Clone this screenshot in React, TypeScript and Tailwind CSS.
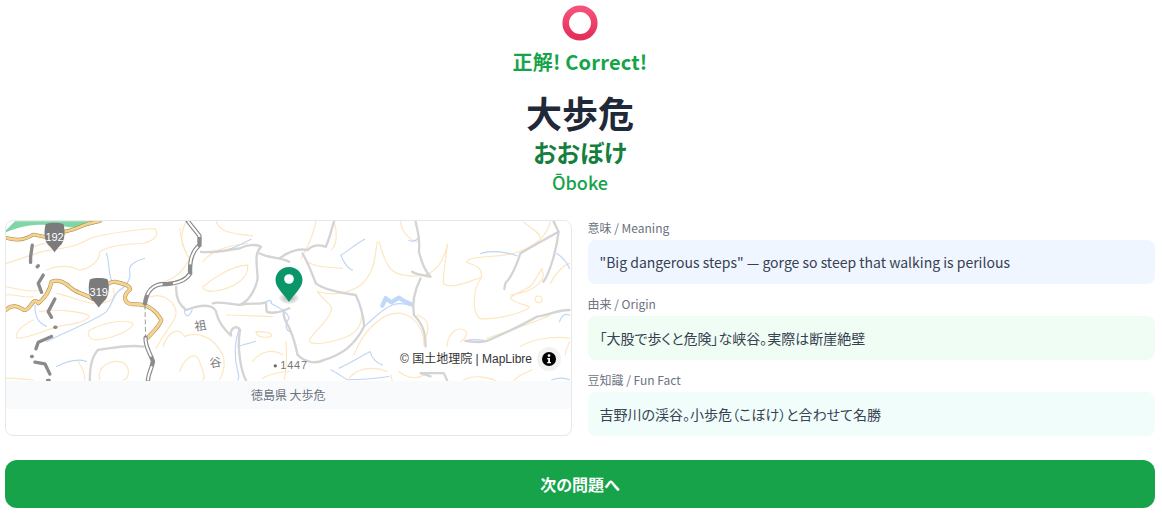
const contoursL = [
  "M18,145 C70,130 110,110 150,105 C190,100 230,95 270,70 C320,55 400,45 465,40 C480,55 470,75 430,85 C380,85 320,95 300,110 C300,140 270,160 240,165 C210,150 170,150 140,165",
  "M18,215 C50,220 90,235 120,225",
  "M18,240 C40,235 70,250 100,245",
  "M220,40 C200,60 150,80 100,95",
  "M170,235 C220,245 260,270 300,265 C340,260 350,245 340,220",
  "M120,290 C170,280 240,290 265,300 C280,310 240,325 200,330 C150,335 100,370 50,370 C45,350 70,330 100,315",
  "M270,345 C310,325 370,310 400,325 C400,345 340,370 290,375 C270,375 260,360 270,345",
  "M540,40 C545,80 560,120 570,130 C550,170 525,190 500,197",
  "M650,18 C660,45 680,55 760,62",
  "M610,140 C640,100 700,90 745,85",
  "M610,215 C640,190 700,150 745,150 C750,190 700,220 650,228 C630,232 610,225 610,215",
  "M440,250 C480,230 520,250 530,290 C530,320 500,340 470,400",
  "M490,395 C510,340 540,340 555,365 C590,350 640,360 670,420 C680,450 670,480 660,495",
  "M540,470 C560,420 590,410 600,440 C610,470 620,490 610,495",
  "M300,495 C290,450 340,430 375,445 C395,470 385,495 370,495",
  "M235,440 C250,460 255,480 255,495",
  "M18,490 C50,490 80,495 100,495",
  "M680,300 C720,300 790,305 820,305",
  "M770,350 C800,350 825,355 815,365 C790,370 770,365 770,350",
  "M760,440 C780,410 820,400 850,420",
  "M790,490 C820,475 850,470 870,470",
  "M560,18 C540,60 545,90 560,110",
];
const contoursR = [
  "M280,80 C270,130 275,170 230,210 C190,240 140,240 100,230 C120,260 150,270 140,290 C130,320 90,350 75,375 C75,395 140,385 190,365 C220,350 235,330 232,290",
  "M285,80 C300,120 305,175 360,180 C420,190 470,180 490,90 C495,70 480,150 478,205 C500,225 550,200 592,188 C600,150 560,150 548,140 C560,120 620,130 690,115 C740,100 790,70 800,18",
  "M720,20 C740,40 770,50 770,70",
  "M70,140 C100,160 140,155 175,160",
  "M150,20 C160,50 160,90 140,105",
  "M95,18 C90,50 70,100 50,130",
  "M350,18 C350,50 380,75 400,80",
  "M592,188 C570,220 560,290 590,312 C640,310 700,300 735,280 C745,270 700,270 680,250 C680,240 720,230 745,210 C770,170 780,150 775,165 C790,190 760,230 680,240",
  "M210,420 C240,340 300,290 350,295 C390,300 420,340 420,390",
  "M400,300 C430,310 440,330 425,370",
  "M490,395 C490,350 530,330 548,350 C548,370 540,375 530,380",
  "M610,370 C670,350 760,320 800,300",
  "M710,395 C760,365 830,365 858,370",
  "M195,490 C215,465 260,450 310,470",
  "M320,480 L325,500",
  "M345,470 C370,490 400,495 420,480",
  "M540,495 C570,480 610,485 640,500",
  "M690,498 C710,475 740,470 745,465",
  "M800,205 C820,170 840,150 858,145",
  "M845,420 C850,390 858,385 858,380",
  "M5,380 C10,440 5,470 0,495",
];
const grayL = [
  "M530,215 C528,250 540,270 560,285 C600,270 640,265 650,290 C655,320 680,350 695,362 C690,340 712,328 722,345 C712,400 725,470 740,497",
  "M605,110 C640,115 680,105 720,100 C740,90 770,85 785,95 C765,115 772,140 775,190 C770,220 750,260 720,270 C690,268 660,258 640,265",
  "M782,115 C810,130 840,125 870,140",
  "M725,270 C750,262 780,270 800,262 L802,290 C820,298 850,290 870,280",
  "M270,497 C270,450 280,420 295,405 C340,400 380,388 432,395",
];
const grayR = [
  "M-15,130 C20,105 50,100 70,105 C90,85 110,90 125,95 C140,60 145,30 150,18",
  "M55,115 C75,150 85,180 95,205 C120,225 180,235 215,240 C230,270 240,310 240,335 C210,395 170,420 120,435 C90,450 60,440 40,420 C30,370 20,345 5,320 C0,310 -5,300 0,285",
  "M395,18 C400,50 410,60 405,110 C415,150 425,170 440,185 C420,180 400,180 385,170",
  "M410,190 C390,230 385,270 390,300 C420,330 425,360 425,395",
  "M440,485 L410,475 L480,475 L490,497",
  "M810,18 L825,50 C790,70 750,90 710,115 C700,150 680,190 665,205 L662,222",
  "M825,50 C820,100 800,170 780,200",
  "M858,285 C820,285 800,300 760,305 C700,340 650,360 610,378 C590,385 565,380 545,378",
];
const blueL = [
  "M320,115 C330,140 325,170 335,195",
  "M435,130 C410,135 385,150 390,170 C395,190 380,215 360,225 C340,240 340,265 320,290 C290,315 220,340 140,380",
  "M105,270 C105,300 110,320 140,335",
  "M170,455 C200,440 235,430 260,440",
  "M720,340 C705,380 705,430 715,470 C720,485 720,490 715,495",
  "M715,395 C730,390 750,385 768,380",
  "M755,72 C730,85 700,100 680,105",
  "M555,285 C555,300 565,315 578,285",
  "M800,260 C810,255 820,255 815,265 C840,280 860,285 870,310 C860,320 855,340 870,350",
];
const blueR = [
  "M242,72 C215,85 190,110 170,120 C175,135 190,160 205,165",
  "M590,115 C620,105 670,110 700,122",
  "M240,335 C270,310 290,285 325,270 C340,265 355,262 380,272",
  "M165,460 C200,445 230,425 258,410 C262,430 280,445 295,450",
  "M140,465 C160,475 180,490 190,495 C230,495 280,490 315,485",
  "M545,378 C570,370 590,375 610,378",
  "M828,320 C835,300 845,295 858,300",
  "M820,115 C835,125 850,140 858,160",
  "M805,495 C825,488 845,490 858,495",
  "M375,75 C385,80 395,80 405,65",
];
const darkDash = [
  "M97,90 L92,125 L92,142 M115,152 L112,155",
  "M130,180 L115,205 L125,232",
  "M165,252 L145,290 L155,307",
  "M165,337 L168,337",
  "M155,365 L115,382 L108,402",
  "M95,425 L97,425",
  "M105,442 L135,447 L150,478",
  "M143,497 L148,497",
];
const road192 = "M18,68 C50,78 80,72 100,58 L135,65 C170,52 210,50 240,35 C260,25 280,22 300,18";
const road319 = "M18,285 C35,265 55,275 72,285 C90,290 100,240 115,265 C135,250 150,225 155,200 C175,190 200,205 215,220 C235,235 260,240 280,252 C310,225 320,200 345,200 C365,205 395,210 390,225 C370,240 370,265 400,268 C440,265 465,280 485,315 C480,335 460,350 445,368";
const roadGray = "M565,18 L600,62 L600,90 C575,110 570,140 572,175 C560,195 540,205 500,207 C450,205 440,240 436,265";
const roadGray2 = "M438,368 C435,395 455,420 460,440 C455,465 445,480 445,497";
const shield = "M-9,-13 C-4,-15 4,-15 9,-13 C11,-5 10,3 7,7 C4,10 2,12 0,15 C-2,12 -4,10 -7,7 C-10,3 -11,-5 -9,-13 Z";

function MapArt() {
  return (
    <svg viewBox="6 221 566 160" className="block h-[160px] w-full" fill="none" strokeLinecap="round" strokeLinejoin="round">
      <rect x="6" y="221" width="566" height="160" fill="#ffffff" />
      <path d="M6,230 L15,221 L103,221 C90,226 80,228 70,227 C50,224 30,222 6,232 Z" fill="#7fd6a4" />
      <g transform="translate(0,215) scale(0.33333)">
        {contoursL.map((d, i) => <path key={i} d={d} stroke="#fde6c0" strokeWidth="3.5" />)}
        {blueL.map((d, i) => <path key={i} d={d} stroke="#bfd4f7" strokeWidth="3.5" />)}
        {grayL.map((d, i) => <path key={i} d={d} stroke="#d4d4d4" strokeWidth="7" />)}
        {darkDash.map((d, i) => <path key={i} d={d} stroke="#8a8a8a" strokeWidth="10" />)}
        <path d={road192} stroke="#a08a5f" strokeWidth="11" />
        <path d={road192} stroke="#f6d188" strokeWidth="8" />
        <path d={road319} stroke="#a08a5f" strokeWidth="12" />
        <path d={road319} stroke="#f8d38c" strokeWidth="9" />
        <path d="M436,270 L438,368" stroke="#888888" strokeWidth="2.5" strokeDasharray="14 8" strokeLinecap="butt" />
        {[roadGray, roadGray2].map((d, i) => (
          <g key={i}>
            <path d={d} stroke="#8b8b8b" strokeWidth="13" />
            <path d={d} stroke="#ffffff" strokeWidth="6" strokeDasharray="60 30" strokeLinecap="butt" />
          </g>
        ))}
      </g>
      <g transform="translate(285,215) scale(0.33333)">
        {contoursR.map((d, i) => <path key={i} d={d} stroke="#fde6c0" strokeWidth="3.5" />)}
        <circle cx="765" cy="253" r="10" stroke="#fde6c0" strokeWidth="3.5" />
        {blueR.map((d, i) => <path key={i} d={d} stroke="#bfd4f7" strokeWidth="3.5" />)}
        <path d="M295,272 L305,250 L322,262 L345,248 L360,258 L382,268" stroke="#c2d8fb" strokeWidth="13" />
        {grayR.map((d, i) => <path key={i} d={d} stroke="#d4d4d4" strokeWidth="7" />)}
      </g>
      <g transform="translate(54.7,237)">
        <path d={shield} fill="#7b7b7b" />
      </g>
      <g transform="translate(99,292.5)">
        <path d={shield} fill="#7b7b7b" />
      </g>
      <g fontFamily="'Liberation Sans', Arial, sans-serif" textAnchor="middle" fontSize="11" fill="#ffffff">
        <text x="54.7" y="240.5">192</text>
        <text x="99" y="296">319</text>
      </g>
      <g fontFamily="'Noto Sans CJK JP', sans-serif" textAnchor="middle" fontSize="12" fill="#777777">
        <text x="201" y="330" transform="rotate(-10 201 326)">祖</text>
        <text x="216" y="367" transform="rotate(-10 216 363)">谷</text>
      </g>
      <circle cx="276" cy="366" r="1.6" fill="#666666" />
      <text x="281" y="369.5" fontFamily="'Liberation Sans', Arial, sans-serif" fontSize="11" letterSpacing="0.8" fill="#777777">1447</text>
    </svg>
  );
}

function Pin() {
  return (
    <svg className="absolute left-[267.5px] top-[45px]" width="30" height="42" viewBox="0 0 30 42" fill="none">
      <defs>
        <radialGradient id="pinShadow">
          <stop offset="0%" stopColor="#777777" stopOpacity="0.7" />
          <stop offset="100%" stopColor="#999999" stopOpacity="0.1" />
        </radialGradient>
      </defs>
      <ellipse cx="15" cy="32" rx="10" ry="6" fill="url(#pinShadow)" />
      <path d="M15,1 C7.5,1 1.5,6.8 1.5,14 C1.5,22 10,28 15,36 C20,28 28.5,22 28.5,14 C28.5,6.8 22.5,1 15,1 Z" fill="#0a9668" />
      <circle cx="15" cy="13" r="4.8" fill="#ffffff" />
    </svg>
  );
}

function Info({ label, text, bg }: { label: string; text: string; bg: string }) {
  return (
    <div>
      <div className="mb-[4px] text-xs leading-[16px] text-[#6b7280]">{label}</div>
      <div className={`flex h-[44px] items-center rounded-lg px-3 text-sm text-[#374151] ${bg}`}>{text}</div>
    </div>
  );
}

export default function App() {
  return (
    <div className="h-[518px] overflow-hidden bg-white pl-[5px] pr-[7px] pt-[4px] font-['Noto_Sans_CJK_JP','Noto_Sans',sans-serif] [font-feature-settings:'palt']">
      <div className="flex flex-col items-center text-center">
        <svg width="38" height="38" viewBox="0 0 38 38" fill="none">
          <defs>
            <linearGradient id="ringGrad" x1="0" y1="0" x2="0" y2="1">
              <stop offset="0%" stopColor="#f6517a" />
              <stop offset="100%" stopColor="#e2305a" />
            </linearGradient>
          </defs>
          <circle cx="19" cy="19" r="14.3" stroke="url(#ringGrad)" strokeWidth="6.6" />
        </svg>
        <div className="mt-[6px] text-xl leading-[28px] font-bold tracking-[0.2px] text-[#16a34a]">正解! Correct!</div>
        <div className="mt-[14px] text-4xl leading-[44px] font-bold text-[#1f2937]">大歩危</div>
        <div className="mt-[2px] text-2xl leading-[32px] font-bold text-[#15803d]">おおぼけ</div>
        <div className="mt-0 text-lg leading-[28px] font-medium text-[#16a34a]">O&#x304;boke</div>
      </div>
      <div className="mt-[24px] flex gap-4">
        <div className="h-[216px] w-[566.5px] shrink-0 overflow-hidden rounded-lg border border-[#e5e7eb] bg-white">
          <div className="relative h-[160px]">
            <MapArt />
            <Pin />
            <div className="absolute left-[394px] top-[129px] font-['Liberation_Sans','Noto_Sans_CJK_JP',sans-serif] text-xs leading-[18px] whitespace-nowrap text-[#333333]">
              © 国土地理院 | MapLibre
            </div>
            <div className="absolute left-[531px] top-[126px] flex h-[24px] w-[24px] items-center justify-center rounded-full bg-[#f2f2f2]">
              <svg width="16" height="16" viewBox="0 0 16 16">
                <circle cx="8" cy="8" r="7" fill="#000000" />
                <circle cx="8" cy="4.6" r="1.3" fill="#ffffff" />
                <path d="M6.2,7 H9 V11 H10 V12.3 H6.2 V11 H7.2 V8.3 H6.2 Z" fill="#ffffff" />
              </svg>
            </div>
          </div>
          <div className="h-[28px] bg-[#f9fafb] text-center text-xs leading-[28px] text-[#6b7280]">徳島県 大歩危</div>
        </div>
        <div className="flex flex-1 flex-col gap-[12px]">
          <Info label="意味 / Meaning" text={'"Big dangerous steps" — gorge so steep that walking is perilous'} bg="bg-[#eff6ff]" />
          <Info label="由来 / Origin" text="「大股で歩くと危険」な峡谷。実際は断崖絶壁" bg="bg-[#f0fdf4]" />
          <Info label="豆知識 / Fun Fact" text="吉野川の渓谷。小歩危（こぼけ）と合わせて名勝" bg="bg-[#f0fdfa]" />
        </div>
      </div>
      <button className="mt-[24px] block h-[48px] w-full rounded-xl bg-[#16a34a] text-center text-base font-bold text-white">次の問題へ</button>
    </div>
  );
}
